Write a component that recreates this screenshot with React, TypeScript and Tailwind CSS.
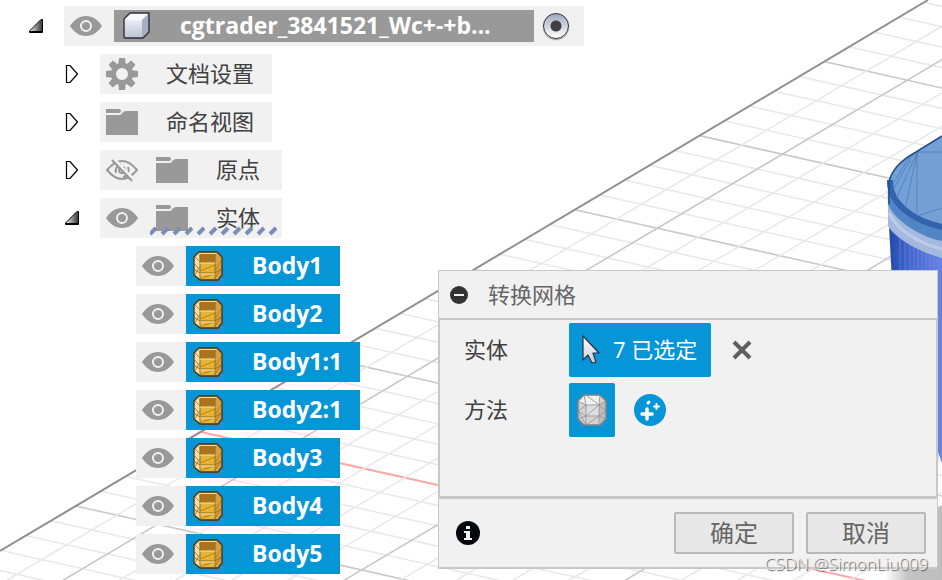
import { useState, type ReactNode } from 'react';

interface Body {
  id: number;
  name: string;
}

const bodies: Body[] = [
  { id: 1, name: 'Body1' },
  { id: 2, name: 'Body2' },
  { id: 3, name: 'Body1:1' },
  { id: 4, name: 'Body2:1' },
  { id: 5, name: 'Body3' },
  { id: 6, name: 'Body4' },
  { id: 7, name: 'Body5' },
];

// every fifth line of the ground plane is a major one
const crossLines = Array.from({ length: 42 }, (_, i) => i - 31);
const alongLines = Array.from({ length: 18 }, (_, i) => i + 1);

function Viewport() {
  return (
    <svg
      className="absolute inset-0 h-full w-full"
      viewBox="0 0 942 580"
      preserveAspectRatio="xMinYMin slice"
      aria-hidden="true"
    >
      <defs>
        <clipPath id="ground">
          <polygon points="0,551 928,0 942,0 942,580 0,580" />
        </clipPath>
        <linearGradient id="wall" x1="0" x2="1" y1="0" y2="0">
          <stop offset="0" stopColor="#1f4aa8" />
          <stop offset="0.35" stopColor="#4062cc" />
          <stop offset="1" stopColor="#6683e6" />
        </linearGradient>
        <linearGradient id="shade" x1="0" x2="1" y1="0" y2="0">
          <stop offset="0" stopColor="#c4c4c4" stopOpacity="0" />
          <stop offset="0.4" stopColor="#c4c4c4" />
          <stop offset="1" stopColor="#bdbdbd" />
        </linearGradient>
      </defs>
      <g clipPath="url(#ground)" fill="none">
        {crossLines.map((i) => {
          const y = 387 + i * 20.4;
          const major = i % 5 === 0;
          return (
            <line
              key={`c${i}`}
              x1="0"
              y1={y}
              x2="942"
              y2={y + 211}
              stroke={i === 0 ? '#ffa6a6' : major ? '#c8c8c8' : '#e9e9e9'}
              strokeWidth={i === 0 ? 2 : 1.6}
            />
          );
        })}
        {alongLines.map((i) => {
          const y = 551 + i * 33.3;
          const major = i % 5 === 2;
          return (
            <line
              key={`a${i}`}
              x1="0"
              y1={y}
              x2="942"
              y2={y - 558}
              stroke={major ? '#c8c8c8' : '#e9e9e9'}
              strokeWidth="1.6"
            />
          );
        })}
      </g>
      <line x1="0" y1="551" x2="928" y2="0" stroke="#8f8f8f" strokeWidth="2" />

      <path d="M885 580 V560 L915 520 L942 505 V580Z" fill="url(#shade)" />
      <path d="M888 200 L889 226 L893 300 L915 400 L938 452 L942 463 V200Z" fill="url(#wall)" />
      <path
        d="M900 236V275M905 240V275M910 243V275M914 246V275M918 248V275M922 250V275M926 252V275M930 254V275M934 256V275M938 258V460"
        stroke="#7f8fe8"
        strokeOpacity="0.5"
      />
      <path d="M942 136 L916 152 C898 162 891 172 889 182 C887 190 888 198 888 206 C898 226 920 240 942 246Z" fill="#5185c6" />
      <path d="M942 136 L916 152 C898 162 891 172 890 186 C892 206 912 220 942 228Z" fill="#74a0d5" />
      <path d="M888 204 C892 216 915 236 942 241 V258 C920 252 897 240 888 226Z" fill="#a4b9de" />
      <path d="M889 213 C897 230 918 243 942 249" fill="none" stroke="#bccbe7" strokeWidth="3" />
      <path d="M890 180 C889 204 914 221 942 227" fill="none" stroke="#3263ac" strokeWidth="6" />
      <path d="M917 152V213M917 152H942M917 216L942 208" fill="none" stroke="#5384c2" />
      <path d="M917 153L896 199M914 153L893 190M910 156L893 184M917 153L905 209" fill="none" stroke="#4577ba" strokeWidth="0.7" />
      <path d="M942 136 L916 152 C898 162 891 172 889 182 V204" fill="none" stroke="#234f8e" strokeWidth="1.5" />
    </svg>
  );
}

function EyeIcon() {
  return (
    <svg width="32" height="20" viewBox="0 0 32 20" aria-hidden="true">
      <path d="M0 10C4 4 9 0 16 0S28 4 32 10C28 16 23 20 16 20S4 16 0 10Z" fill="#999" />
      <circle cx="16" cy="10" r="5" fill="#999" stroke="#f1f1f1" strokeWidth="2" />
    </svg>
  );
}

function EyeOffIcon() {
  return (
    <svg width="32" height="24" viewBox="0 0 32 24" fill="none" stroke="#999" aria-hidden="true">
      <path d="M1 12C6 6 10 3 16 3S26 6 31 12C26 18 22 21 16 21S6 18 1 12Z" strokeWidth="2" />
      <path d="M10 15A7 7 0 0 1 15 6M22 9A7 7 0 0 1 17 19" strokeWidth="2" />
      <circle cx="16" cy="12" r="3" strokeWidth="2" />
      <path d="M8 1L28 22" stroke="#f1f1f1" strokeWidth="3" />
      <path d="M6 2L26 23" strokeWidth="2" />
    </svg>
  );
}

function GearIcon() {
  return (
    <svg width="32" height="32" viewBox="0 0 32 32" aria-hidden="true">
      <g fill="#999">
        {[0, 45, 90, 135].map((angle) => (
          <path key={angle} d="M13 0H19L20 8V24L19 32H13L12 24V8Z" transform={`rotate(${angle} 16 16)`} />
        ))}
        <circle cx="16" cy="16" r="11" />
      </g>
      <circle cx="16" cy="16" r="6" fill="#f1f1f1" />
    </svg>
  );
}

function FolderIcon() {
  return (
    <svg width="32" height="26" viewBox="0 0 32 26" fill="#999" aria-hidden="true">
      <path d="M0 0H13Q15 0 15 2T13 4H0Z" />
      <path d="M0 6H13Q15 6 16 4.500Q17 2 20 2H32V26H0Z" />
    </svg>
  );
}

function CubeIcon() {
  return (
    <svg width="28" height="28" viewBox="0 0 28 28" aria-hidden="true">
      <defs>
        <linearGradient id="cube" x1="0" x2="0" y1="0" y2="1">
          <stop offset="0" stopColor="#e9edf5" />
          <stop offset="1" stopColor="#bcc4d4" />
        </linearGradient>
      </defs>
      <path d="M2 7L8 1H27V20L21 26H2Z" fill="#f5f7fa" />
      <path d="M2 8H20V26H2Z" fill="url(#cube)" />
      <path d="M20 8L27 1V20L21 26H20Z" fill="#a7afc0" />
      <path d="M2 7L8 1H27V20L21 26H3L2 25Z" fill="none" stroke="#2f3136" strokeWidth="1.4" strokeLinejoin="round" />
    </svg>
  );
}

function MeshBodyIcon() {
  return (
    <svg width="30" height="30" viewBox="0 0 30 30" strokeLinejoin="round" aria-hidden="true">
      <path d="M6 1H24L29 6V24L25 29H7L1 24V6Z" fill="#e0b344" />
      <path d="M7 2H22V14H7Z" fill="#a97519" />
      <path d="M1 6L6 2L7 14V28L1 24Z" fill="#f3e1ae" />
      <path d="M22 2L29 6V24L22 28Z" fill="#d3a23f" />
      <path d="M7 12H22V28H7Z" fill="#e3b635" />
      <path d="M7 2V28M22 2V28M2 19L7 22H22L28 18" fill="none" stroke="#9a6a1c" strokeWidth="1" />
      <path
        d="M2 6L7 11M7 4L22 10M2 13L7 20M7 20L22 14M7 28L22 22M22 20L28 10M22 27L28 18M2 24L7 15"
        fill="none"
        stroke="#a87624"
        strokeWidth="0.8"
      />
      <path d="M7 12H22M6 2.500H23M7 23H22" stroke="#f6e2a8" strokeWidth="1" />
      <path d="M6 1H24L29 6V24L25 29H7L1 24V6Z" fill="none" stroke="#4d3013" strokeWidth="1.3" />
    </svg>
  );
}

function MethodIcon() {
  return (
    <svg width="30" height="32" viewBox="0 0 30 32" strokeLinejoin="round" aria-hidden="true">
      <path d="M7 1H23L29 7V25L23 31H7L1 25V7Z" fill="#d3d3d3" />
      <path d="M7 1H23L22 11H9L1 7Z" fill="#f1f1f1" />
      <path d="M9 11H22V22H9Z" fill="#dedede" />
      <path d="M22 11L29 7V25L23 31L22 22Z" fill="#bdbdbd" />
      <path d="M1 7L9 11H22L29 7M9 11V31M22 11V31M1 17L9 22H22L29 17M9 11L7 1M9 1L22 11L23 1M1 17L9 11M9 22L22 11M9 31L22 22M29 17L22 11M1 25L9 22M29 25L22 22M1 17L9 31" fill="none" stroke="#969696" strokeWidth="0.9" />
      <path d="M7 1H23L29 7V25L23 31H7L1 25V7Z" fill="none" stroke="#828282" strokeWidth="1.5" />
    </svg>
  );
}

function CursorIcon() {
  return (
    <svg width="20" height="32" viewBox="0 0 20 32" aria-hidden="true">
      <defs>
        <linearGradient id="cursor" x1="0" x2="0" y1="0" y2="1">
          <stop offset="0" stopColor="#ffffff" />
          <stop offset="1" stopColor="#c6ccd8" />
        </linearGradient>
      </defs>
      <path d="M2 2V26L7 21L11 29L15 28L12 19H18Z" fill="url(#cursor)" stroke="#27333f" strokeWidth="1.2" strokeLinejoin="round" />
    </svg>
  );
}

function Arrow({ open }: { open: boolean }) {
  if (open) {
    return (
      <svg width="14" height="14" viewBox="0 0 14 14" aria-hidden="true">
        <defs>
          <linearGradient id="arrow" x1="0" x2="1" y1="0" y2="0">
            <stop offset="0" stopColor="#f0f0f0" />
            <stop offset="1" stopColor="#333" />
          </linearGradient>
        </defs>
        <path d="M0.500 12L12 0.500H13.500V13.500H0.500Z" fill="url(#arrow)" stroke="#000" />
        <path d="M1 13H13" stroke="#000" strokeWidth="2" />
      </svg>
    );
  }
  return (
    <svg width="14" height="18" viewBox="0 0 14 18" aria-hidden="true">
      <path d="M1.500 0.500H5L12.500 9L5 17.500H1.500Z" fill="#fff" stroke="#000" strokeWidth="1.2" />
    </svg>
  );
}

interface RowProps {
  label: string;
  open?: boolean;
  onToggle?: () => void;
  children: ReactNode;
}

function Row({ label, open = false, onToggle, children }: RowProps) {
  return (
    <div className="flex h-10 items-center">
      <button type="button" aria-label={label} aria-expanded={open} onClick={onToggle} className="w-[35px] shrink-0">
        <Arrow open={open} />
      </button>
      {children}
    </div>
  );
}

function Browser() {
  const [rootOpen, setRootOpen] = useState(true);
  const [bodiesOpen, setBodiesOpen] = useState(true);

  return (
    <nav aria-label="浏览器" className="relative pt-[6px] pl-[29px] text-[22px] leading-8 text-[#404040]">
      <Row label="展开零部件" open={rootOpen} onToggle={() => setRootOpen(!rootOpen)}>
        <div className="flex h-10 items-center bg-[#f1f1f1] pr-[15px]">
          <button type="button" aria-label="可见性" className="flex w-[50px] pl-[6px]">
            <EyeIcon />
          </button>
          <button type="button" className="flex h-8 w-[420px] items-center bg-[#999] pl-2 text-left text-[23px] font-bold text-white">
            <CubeIcon />
            <span className="pb-[2px] pl-[30px] whitespace-nowrap">cgtrader_3841521_Wc+-+b…</span>
          </button>
          <input
            type="radio"
            name="active"
            aria-label="激活零部件"
            defaultChecked
            className="ml-[9px] size-[26px] appearance-none rounded-full border border-[#333] bg-[radial-gradient(circle,#3f3f44_5px,transparent_6px),linear-gradient(#a0a8be,#ffffff)] shadow-[0_1px_1px_#999]"
          />
        </div>
      </Row>

      {rootOpen && (
        <ul className="flex flex-col gap-2 pt-2 pl-9">
          <li>
            <Row label="展开文档设置">
              <button type="button" className="flex h-10 items-center gap-7 bg-[#f1f1f1] pr-[18px] pl-[6px]">
                <GearIcon />
                <span className="pb-[2px]">文档设置</span>
              </button>
            </Row>
          </li>
          <li>
            <Row label="展开命名视图">
              <button type="button" className="flex h-10 items-center gap-7 bg-[#f1f1f1] pr-[18px] pl-[6px]">
                <FolderIcon />
                <span className="pb-[2px]">命名视图</span>
              </button>
            </Row>
          </li>
          <li>
            <Row label="展开原点">
              <div className="flex h-10 items-center bg-[#f1f1f1] pr-[22px] pl-[6px]">
                <button type="button" aria-label="可见性" className="w-[50px]">
                  <EyeOffIcon />
                </button>
                <button type="button" className="flex items-center gap-7">
                  <FolderIcon />
                  <span className="pb-[2px]">原点</span>
                </button>
              </div>
            </Row>
          </li>
          <li>
            <Row label="展开实体" open={bodiesOpen} onToggle={() => setBodiesOpen(!bodiesOpen)}>
              <div className="relative flex h-10 items-center bg-[#f1f1f1] pr-[22px] pl-[6px]">
                <button type="button" aria-label="可见性" className="w-[50px]">
                  <EyeIcon />
                </button>
                <button type="button" className="flex items-center gap-7">
                  <FolderIcon />
                  <span className="pb-[2px]">实体</span>
                </button>
                <svg width="132" height="10" className="absolute right-0 bottom-[2px]" aria-hidden="true">
                  {Array.from({ length: 11 }, (_, i) => (
                    <path key={i} d="M0 8L6 2" transform={`translate(${i * 12} 0)`} stroke="#7a8db3" strokeWidth="4" />
                  ))}
                </svg>
              </div>
            </Row>
            {bodiesOpen && (
              <ul className="flex flex-col gap-2 pt-2 pl-[71px]">
                {bodies.map((body) => (
                  <li key={body.id} className="flex h-10">
                    <button type="button" aria-label="可见性" className="flex w-[50px] items-center bg-[#f1f1f1] pl-[6px]">
                      <EyeIcon />
                    </button>
                    <button
                      type="button"
                      className="flex items-center gap-[29px] bg-[#0696d7] pr-[18px] pl-[7px] text-[23px] font-bold text-white"
                    >
                      <MeshBodyIcon />
                      <span className="pb-[2px]">{body.name}</span>
                    </button>
                  </li>
                ))}
              </ul>
            )}
          </li>
        </ul>
      )}
    </nav>
  );
}

function ConvertDialog() {
  return (
    <section
      role="dialog"
      aria-labelledby="dialog-title"
      className="absolute top-[270px] right-1 w-[500px] bg-[#f1f1f1] text-[22px] leading-8 text-[#404040]"
    >
      <header className="flex h-[50px] items-center gap-[19px] border border-b-2 border-[#c8c8c8] pl-[10px]">
        <button type="button" aria-label="折叠">
          <svg width="20" height="20" viewBox="0 0 20 20" aria-hidden="true">
            <circle cx="10" cy="10" r="9" fill="#333" />
            <path d="M5 10H15" stroke="#f1f1f1" strokeWidth="2" />
          </svg>
        </button>
        <h2 id="dialog-title" className="pb-[2px] text-[#666]">
          转换网格
        </h2>
      </header>

      <div className="flex h-[178px] flex-col gap-[6px] border-x-2 border-b-2 border-[#c8c8c8] pt-[3px] pl-6">
        <div className="flex h-[54px] items-center">
          <span className="w-[105px] pb-[2px]">实体</span>
          <button type="button" className="flex h-full w-[142px] items-center gap-3 rounded-[2px] bg-[#0696d7] pl-3 text-white">
            <CursorIcon />
            <span className="pb-[2px] whitespace-nowrap">7 已选定</span>
          </button>
          <button type="button" aria-label="清除选择" className="ml-[21px]">
            <svg width="20" height="20" viewBox="0 0 20 20" aria-hidden="true">
              <path d="M2 2L18 18M18 2L2 18" stroke="#5f5f5f" strokeWidth="4" />
            </svg>
          </button>
        </div>
        <div className="flex h-[54px] items-center">
          <span className="w-[105px] pb-[2px]">方法</span>
          <button type="button" aria-label="分面" className="flex h-full w-[46px] items-center justify-center rounded-[2px] bg-[#0696d7]">
            <MethodIcon />
          </button>
          <button type="button" aria-label="棱柱" className="ml-[19px]">
            <svg width="32" height="32" viewBox="0 0 32 32" aria-hidden="true">
              <circle cx="16" cy="16" r="16" fill="#0696d7" />
              <g fill="none" stroke="#fff" strokeLinecap="round">
                <path d="M13 15V25M8 20H18" strokeWidth="3.500" />
                <path d="M22.500 10V15M20 12.500H25" strokeWidth="2" />
                <path d="M14 9L15 8" strokeWidth="3" />
              </g>
            </svg>
          </button>
        </div>
      </div>

      <footer className="flex h-[71px] items-center gap-3 border border-b-2 border-[#c8c8c8] pr-[11px] pl-[17px]">
        <button type="button" aria-label="信息" className="mr-auto">
          <svg width="24" height="24" viewBox="0 0 24 24" aria-hidden="true">
            <circle cx="12" cy="12" r="12" fill="#05070d" />
            <path d="M10 5H14V8H10ZM8 10H14V17H16V19H8V17H10V12H8Z" fill="#f1f1f1" />
          </svg>
        </button>
        <button type="button" className="h-[42px] w-[120px] rounded-[2px] border-2 border-[#b9b9b9] bg-[#e8e8e8] text-2xl text-[#666]">
          确定
        </button>
        <button type="button" className="h-[42px] w-[120px] rounded-[2px] border-2 border-[#b9b9b9] bg-[#e8e8e8] text-2xl text-[#666]">
          取消
        </button>
      </footer>
    </section>
  );
}

export default function App() {
  return (
    <main className="relative min-h-screen overflow-hidden bg-white font-['Open_Sans','Noto_Sans_CJK_SC',sans-serif]">
      <Viewport />
      <Browser />
      <ConvertDialog />
      <p className="absolute right-[14px] bottom-1 text-[17px] leading-6 font-light text-[#f1f1f1] [text-shadow:1px_1px_1px_#444]">
        CSDN @SimonLiu009
      </p>
    </main>
  );
}
